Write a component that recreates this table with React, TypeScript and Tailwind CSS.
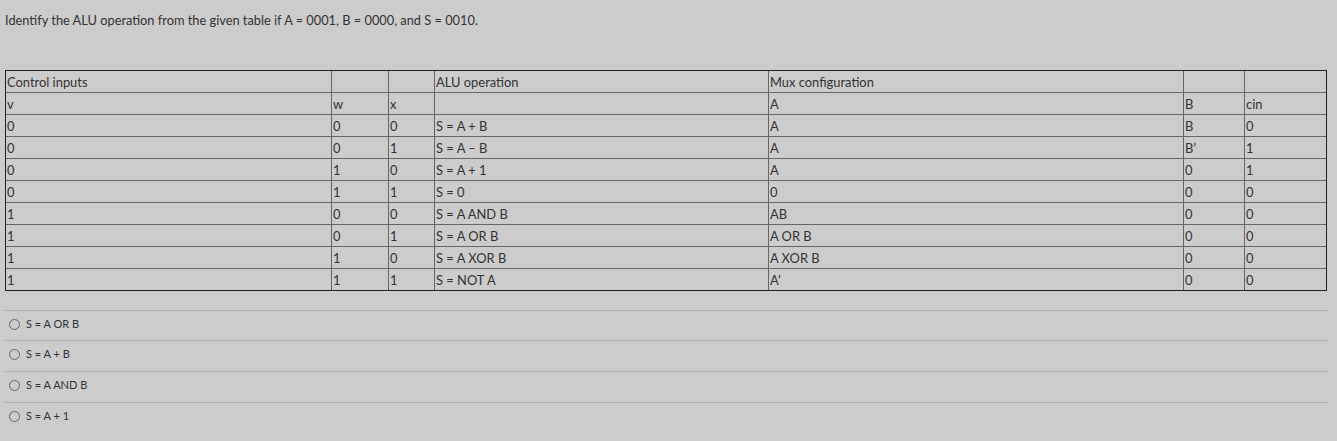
import React from 'react';

const rows: string[][] = [
  ['0', '0', '0', 'S = A + B', 'A', 'B', '0'],
  ['0', '0', '1', 'S = A – B', 'A', 'B\u2019', '1'],
  ['0', '1', '0', 'S = A + 1', 'A', '0', '1'],
  ['0', '1', '1', 'S = 0', '0', '0', '0'],
  ['1', '0', '0', 'S = A AND B', 'AB', '0', '0'],
  ['1', '0', '1', 'S = A OR B', 'A OR B', '0', '0'],
  ['1', '1', '0', 'S = A XOR B', 'A XOR B', '0', '0'],
  ['1', '1', '1', 'S = NOT A', 'A\u2019', '0', '0'],
];

const widths = ['w-[326px]', 'w-[57px]', 'w-[46px]', 'w-[334px]', 'w-[415px]', 'w-[61px]', 'w-[81px]'];

const options = ['S = A OR B', 'S = A + B', 'S = A AND B', 'S = A + 1'];

const Cell: React.FC<{ text: string; last: boolean; lastRow: boolean }> = ({ text, last, lastRow }) => (
  <td
    className={`p-0 pl-[1px] align-middle whitespace-nowrap text-left ${last ? '' : 'border-r border-[#666]'} ${
      lastRow ? 'h-[21px]' : 'h-[22px] border-b border-[#666]'
    }`}
  >
    {text}
  </td>
);

const App: React.FC = () => {
  const header = ['Control inputs', '', '', 'ALU operation', 'Mux configuration', '', ''];
  const sub = ['v', 'w', 'x', '', 'A', 'B', 'cin'];
  const all = [header, sub, ...rows];

  return (
    <div className="min-h-[441px] bg-[#cccccc] px-[5px] text-[#333] font-['Lato','Liberation_Sans',sans-serif]">
      <p className="pt-[11px] text-[12.8px] leading-[18px]">
        Identify the ALU operation from the given table if A = 0001, B = 0000, and S = 0010.
      </p>

      {/* tabla */}
      <div className="mt-[41px] w-[1322px] border border-[#222]">
        <table className="table-fixed border-separate border-spacing-0 w-[1320px] text-[12.9px] leading-[14px] text-[#333]">
          <colgroup>
            {widths.map((w, i) => (
              <col key={i} className={w} />
            ))}
          </colgroup>
          <tbody>
            {all.map((r, ri) => (
              <tr key={ri}>
                {r.map((c, ci) => (
                  <Cell key={ci} text={c} last={ci === r.length - 1} lastRow={ri === all.length - 1} />
                ))}
              </tr>
            ))}
          </tbody>
        </table>
      </div>

      {/* opciones */}
      <div className="mt-[19px] w-[1323px]">
        {options.map((o, i) => (
          <label
            key={o}
            className={`flex items-center border-t border-[#b0b0b0] pl-[4px] pt-[6px] text-[11px] leading-[14px] text-[#333] ${
              i === 0 ? 'pb-[9px]' : 'pb-[10px]'
            }`}
          >
            <span className="mr-[6px] inline-block h-[11px] w-[11px] rounded-full border-[1.5px] border-[#666]" />
            {o}
          </label>
        ))}
      </div>
    </div>
  );
};

export default App;
